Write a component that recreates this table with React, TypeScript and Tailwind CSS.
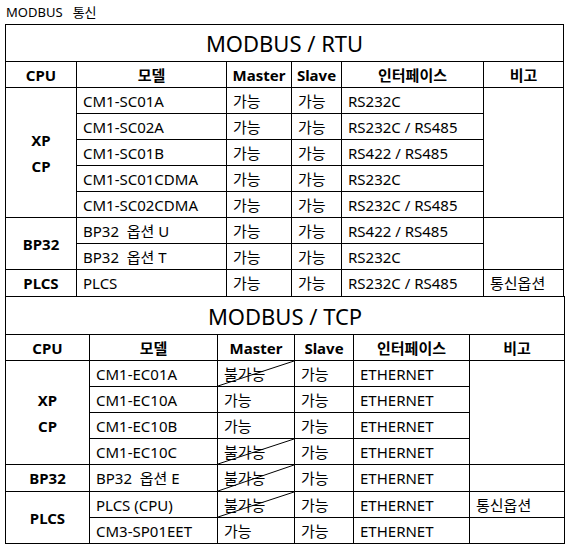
import React from "react";

const font = { fontFamily: '"Noto Sans", "Noto Sans CJK KR", sans-serif' };

function Diag() {
  return (
    <svg className="absolute inset-0 w-full h-full pointer-events-none" viewBox="0 0 100 100" preserveAspectRatio="none">
      <line x1="0" y1="100" x2="100" y2="0" stroke="#000" strokeWidth="1" vectorEffect="non-scaling-stroke" />
    </svg>
  );
}

const td = "border border-black h-[26px] px-[6px] py-0 text-[15px] leading-[24px] whitespace-pre align-middle";
const th = "border border-black h-[26px] px-0 py-0 text-[15px] leading-[24px] font-bold text-center align-middle";
const cpu = "border border-black px-0 py-0 text-[15px] leading-[26px] font-bold text-center align-middle";

type Row = { model: string; master: string; slave: string; iface: string; note?: string };

function MasterCell({ v }: { v: string }) {
  const no = v === "불가능";
  return (
    <td className={td + " relative"}>
      {v}
      {no && <Diag />}
    </td>
  );
}

export default function App() {
  const rtuXP: Row[] = [
    { model: "CM1-SC01A", master: "가능", slave: "가능", iface: "RS232C" },
    { model: "CM1-SC02A", master: "가능", slave: "가능", iface: "RS232C / RS485" },
    { model: "CM1-SC01B", master: "가능", slave: "가능", iface: "RS422 / RS485" },
    { model: "CM1-SC01CDMA", master: "가능", slave: "가능", iface: "RS232C" },
    { model: "CM1-SC02CDMA", master: "가능", slave: "가능", iface: "RS232C / RS485" },
  ];
  const rtuBP: Row[] = [
    { model: "BP32  옵션 U", master: "가능", slave: "가능", iface: "RS422 / RS485" },
    { model: "BP32  옵션 T", master: "가능", slave: "가능", iface: "RS232C" },
  ];
  const tcpXP: Row[] = [
    { model: "CM1-EC01A", master: "불가능", slave: "가능", iface: "ETHERNET" },
    { model: "CM1-EC10A", master: "가능", slave: "가능", iface: "ETHERNET" },
    { model: "CM1-EC10B", master: "가능", slave: "가능", iface: "ETHERNET" },
    { model: "CM1-EC10C", master: "불가능", slave: "가능", iface: "ETHERNET" },
  ];

  return (
    <div className="w-[570px] h-[547px] bg-white text-black" style={font}>
      <div className="h-[24px] pl-[6px] pt-[4px] text-[13px] leading-[16px] whitespace-pre">MODBUS   통신</div>
      <div className="ml-[5px] w-[559px]">
        <table className="table-fixed border-collapse w-[559px]">
          <colgroup>
            <col className="w-[71px]" />
            <col className="w-[150px]" />
            <col className="w-[65px]" />
            <col className="w-[50px]" />
            <col className="w-[142px]" />
            <col className="w-[80px]" />
          </colgroup>
          <tbody>
            <tr>
              <td colSpan={6} className="border border-black h-[37px] p-0 text-center text-[22px] leading-[36px]">MODBUS / RTU</td>
            </tr>
            <tr>
              <td className={th}>CPU</td>
              <td className={th}>모델</td>
              <td className={th}>Master</td>
              <td className={th}>Slave</td>
              <td className={th}>인터페이스</td>
              <td className={th}>비고</td>
            </tr>
            {rtuXP.map((r, i) => (
              <tr key={r.model}>
                {i === 0 && (
                  <td rowSpan={5} className={cpu}>
                    XP
                    <br />
                    CP
                  </td>
                )}
                <td className={td}>{r.model}</td>
                <MasterCell v={r.master} />
                <td className={td}>{r.slave}</td>
                <td className={td}>{r.iface}</td>
                {i === 0 && <td rowSpan={5} className={td}></td>}
              </tr>
            ))}
            {rtuBP.map((r, i) => (
              <tr key={r.model}>
                {i === 0 && (
                  <td rowSpan={2} className={cpu}>
                    BP32
                  </td>
                )}
                <td className={td}>{r.model}</td>
                <MasterCell v={r.master} />
                <td className={td}>{r.slave}</td>
                <td className={td}>{r.iface}</td>
                {i === 0 && <td rowSpan={2} className={td}></td>}
              </tr>
            ))}
            <tr>
              <td className={cpu}>PLCS</td>
              <td className={td}>PLCS</td>
              <MasterCell v="가능" />
              <td className={td}>가능</td>
              <td className={td}>RS232C / RS485</td>
              <td className={td}>통신옵션</td>
            </tr>
          </tbody>
        </table>
        <table className="table-fixed border-collapse w-[559px] -mt-px">
          <colgroup>
            <col className="w-[84px]" />
            <col className="w-[128px]" />
            <col className="w-[77px]" />
            <col className="w-[59px]" />
            <col className="w-[116px]" />
            <col className="w-[95px]" />
          </colgroup>
          <tbody>
            <tr>
              <td colSpan={6} className="border border-black h-[38px] p-0 text-center text-[22px] leading-[36px]">MODBUS / TCP</td>
            </tr>
            <tr>
              <td className={th}>CPU</td>
              <td className={th}>모델</td>
              <td className={th}>Master</td>
              <td className={th}>Slave</td>
              <td className={th}>인터페이스</td>
              <td className={th}>비고</td>
            </tr>
            {tcpXP.map((r, i) => (
              <tr key={r.model}>
                {i === 0 && (
                  <td rowSpan={4} className={cpu}>
                    XP
                    <br />
                    CP
                  </td>
                )}
                <td className={td}>{r.model}</td>
                <MasterCell v={r.master} />
                <td className={td}>{r.slave}</td>
                <td className={td}>{r.iface}</td>
                {i === 0 && <td rowSpan={4} className={td}></td>}
              </tr>
            ))}
            <tr>
              <td className={cpu}>BP32</td>
              <td className={td}>BP32  옵션 E</td>
              <MasterCell v="불가능" />
              <td className={td}>가능</td>
              <td className={td}>ETHERNET</td>
              <td className={td}></td>
            </tr>
            <tr>
              <td rowSpan={2} className={cpu}>PLCS</td>
              <td className={td}>PLCS (CPU)</td>
              <MasterCell v="불가능" />
              <td className={td}>가능</td>
              <td className={td}>ETHERNET</td>
              <td className={td}>통신옵션</td>
            </tr>
            <tr>
              <td className={td}>CM3-SP01EET</td>
              <MasterCell v="가능" />
              <td className={td}>가능</td>
              <td className={td}>ETHERNET</td>
              <td className={td}></td>
            </tr>
          </tbody>
        </table>
      </div>
    </div>
  );
}
